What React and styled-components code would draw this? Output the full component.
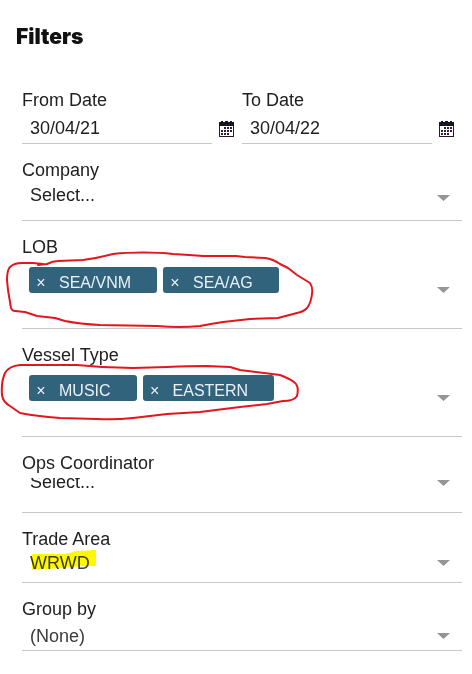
import React from "react";
import styled, { createGlobalStyle } from "styled-components";

const GlobalStyle = createGlobalStyle`
  *, *::before, *::after { box-sizing: border-box; }
  body {
    margin: 0;
    background: #fff;
    color: #212121;
    font-family: "Liberation Sans", Arial, sans-serif;
    font-size: 18px;
    line-height: 20px;
  }
`;

const Panel = styled.main`
  padding: 24px 10px 22px 16px;
`;

const Title = styled.h1`
  margin: 0 0 40px;
  font-family: Inter, sans-serif;
  font-size: 21px;
  font-weight: 900;
  line-height: 26px;
  color: #111;
`;

const Form = styled.form`
  display: flex;
  flex-direction: column;
  gap: 16px;
  padding-left: 6px;
`;

const DateRow = styled.div`
  display: grid;
  grid-template-columns: 1fr 1fr;
`;

const Field = styled.div`
  display: flex;
  flex-direction: column;
  min-width: 0;
`;

const Label = styled.label`
  display: block;
`;

const DateControl = styled.div`
  display: flex;
  align-items: center;
  gap: 7px;
  padding-right: 8px;
`;

const DateInput = styled.input`
  flex: 1;
  min-width: 0;
  height: 34px;
  padding: 4px 0 0 8px;
  border: 0;
  border-bottom: 1px solid #c8c8c8;
  background: transparent;
  color: inherit;
  font: inherit;
  outline: none;
`;

const IconButton = styled.button`
  display: flex;
  padding: 4px 0 0;
  border: 0;
  background: none;
`;

const Control = styled.div`
  position: relative;
  display: grid;
  grid-template-columns: 1fr 38px;
  align-items: start;
  height: ${(p) => p.$height}px;
  padding-top: ${(p) => p.$inset}px;
  border-bottom: 1px solid #c8c8c8;
`;

const Clip = styled.div`
  grid-area: 1 / 1 / 2 / 3;
  display: flex;
  align-items: flex-end;
  height: ${(p) => (p.$cut ? 14 : 20)}px;
  overflow: hidden;
`;

const Select = styled.select`
  flex: 1;
  min-width: 0;
  height: 20px;
  padding: 0 38px 0 8px;
  border: 0;
  appearance: none;
  background: transparent;
  color: ${(p) => (p.$muted ? "#3c3c3c" : "inherit")};
  font: inherit;
  outline: none;
`;

const Chips = styled.div`
  display: flex;
  flex-wrap: wrap;
  gap: 6px;
  padding-left: 7px;
`;

const Chip = styled.span`
  display: flex;
  align-items: center;
  height: 26px;
  padding: 5px 26px 0 0;
  border-radius: 3px;
  background: #31637d;
  color: #eaf0f8;
  font-size: 16px;
  line-height: 20px;
`;

const Remove = styled.button`
  width: 30px;
  padding: 0 6px 0 0;
  border: 0;
  background: none;
  color: inherit;
  font: inherit;
`;

const Caret = styled.svg`
  display: block;
  width: 13px;
  height: 6px;
  fill: #959595;
`;

const CaretSlot = styled.span`
  grid-area: 1 / 2 / 2 / 3;
  justify-self: center;
  padding-top: ${(p) => p.$drop}px;
  pointer-events: none;
`;

const CaretButton = styled.button`
  justify-self: center;
  padding: 20px 0 0;
  border: 0;
  background: none;
`;

const Ink = styled.svg`
  position: absolute;
  top: 0;
  left: 0;
  overflow: visible;
  pointer-events: none;
  fill: none;
  stroke: #e3161d;
  stroke-width: 2;
  stroke-linecap: round;
  stroke-linejoin: round;
`;

const Highlight = styled.svg`
  position: absolute;
  top: 0;
  left: 9px;
  mix-blend-mode: multiply;
  pointer-events: none;
  fill: #fff900;
`;

function CaretShape() {
  return (
    <Caret viewBox="0 0 13 6" aria-hidden="true">
      <path d="M0 0H13L6.5 6Z" />
    </Caret>
  );
}

function CalendarIcon() {
  return (
    <svg width="15" height="16" viewBox="0 0 15 16" shapeRendering="crispEdges" aria-hidden="true">
      <path d="M0 1H2V0H4V1H6V0H9V1H11V0H13V1H15V5H0Z" fill="#17151f" />
      <path d="M0 5H1V15H14V5H15V16H0Z" fill="#2b1730" />
      <path
        d="M5 6h2v2H5zM8 6h2v2H8zM11 6h2v2h-2zM2 9h2v2H2zM5 9h2v2H5zM8 9h2v2H8zM11 9h2v2h-2zM2 12h2v2H2zM5 12h2v2H5zM8 12h2v2H8z"
        fill="#35203b"
      />
    </svg>
  );
}

function DateField({ id, label, value }) {
  return (
    <Field>
      <Label htmlFor={id}>{label}</Label>
      <DateControl>
        <DateInput id={id} defaultValue={value} />
        <IconButton type="button" aria-label={`Choose ${label}`}>
          <CalendarIcon />
        </IconButton>
      </DateControl>
    </Field>
  );
}

function SelectField({ id, label, value, height, inset, cut, muted, drop, children }) {
  return (
    <Field>
      <Label htmlFor={id}>{label}</Label>
      <Control $height={height} $inset={inset}>
        <Clip $cut={cut}>
          <Select id={id} $muted={muted}>
            <option>{value}</option>
          </Select>
        </Clip>
        <CaretSlot $drop={drop}>
          <CaretShape />
        </CaretSlot>
        {children}
      </Control>
    </Field>
  );
}

function ChipField({ id, label, values, children }) {
  return (
    <Field role="group" aria-labelledby={id}>
      <Label as="span" id={id}>{label}</Label>
      <Control $height={72} $inset={10}>
        <Chips>
          {values.map((v) => (
            <Chip key={v}>
              <Remove type="button" aria-label={`Remove ${v}`}>×</Remove>
              {v}
            </Chip>
          ))}
        </Chips>
        <CaretButton type="button" aria-label={`Open ${label}`}>
          <CaretShape />
        </CaretButton>
        {children}
      </Control>
    </Field>
  );
}

export default function App() {
  return (
    <>
      <GlobalStyle />
      <Panel>
        <Title>Filters</Title>
        <Form>
          <DateRow>
            <DateField id="from" label="From Date" value="30/04/21" />
            <DateField id="to" label="To Date" value="30/04/22" />
          </DateRow>
          <SelectField id="company" label="Company" value="Select..." height={41} inset={5} drop={10} />
          <ChipField id="lob" label="LOB" values={["SEA/VNM", "SEA/AG"]}>
            <Ink width="310" height="80" viewBox="22 257 310 80" aria-hidden="true">
              <path d="M38 265L47 264Q53 261 58 261L83 260Q98 258 113 254C130 252 156 252 173 254Q190 255 203 256H236L245 257L265 258Q273 259 280 264L288 268L297 275L310 283Q313 287 312 294Q311 303 307 308Q303 312 297 313L278 318L250 319L223 322Q210 324 200 326Q180 328 157 326L100 325Q80 324 65 321L55 318L37 316L25 312L15 311Q12 311 11 308L8 290L7 280Q7 270 10 267Q14 263 22 263L33 263L43 264" />
            </Ink>
          </ChipField>
          <ChipField id="vessel" label="Vessel Type" values={["MUSIC", "EASTERN"]}>
            <Ink width="310" height="80" viewBox="22 365 310 80" aria-hidden="true">
              <path d="M20 365L77 365Q105 368 133 368L167 367Q190 366 207 366L230 367L240 370L280 375Q293 380 296 384Q299 388 297 396Q294 401 283 401L267 404L240 407L200 412L167 414L133 418Q115 420 97 419L60 418Q35 416 20 413L10 406Q3 402 2 395Q1 382 5 373Q9 366 20 365" />
            </Ink>
          </ChipField>
          <SelectField id="ops" label="Ops Coordinator" value="Select..." height={40} inset={5} drop={2} cut />
          <SelectField id="trade" label="Trade Area" value="WRWD" height={34} inset={4} drop={7} muted>
            <Highlight width="66" height="22" viewBox="0 0 66 22" aria-hidden="true">
              <path d="M1 5L34 5L46 2L65 1V17H49L31 19L1 21Z" />
            </Highlight>
          </SelectField>
          <SelectField id="group" label="Group by" value="(None)" height={32} inset={7} drop={7} muted />
        </Form>
      </Panel>
    </>
  );
}
